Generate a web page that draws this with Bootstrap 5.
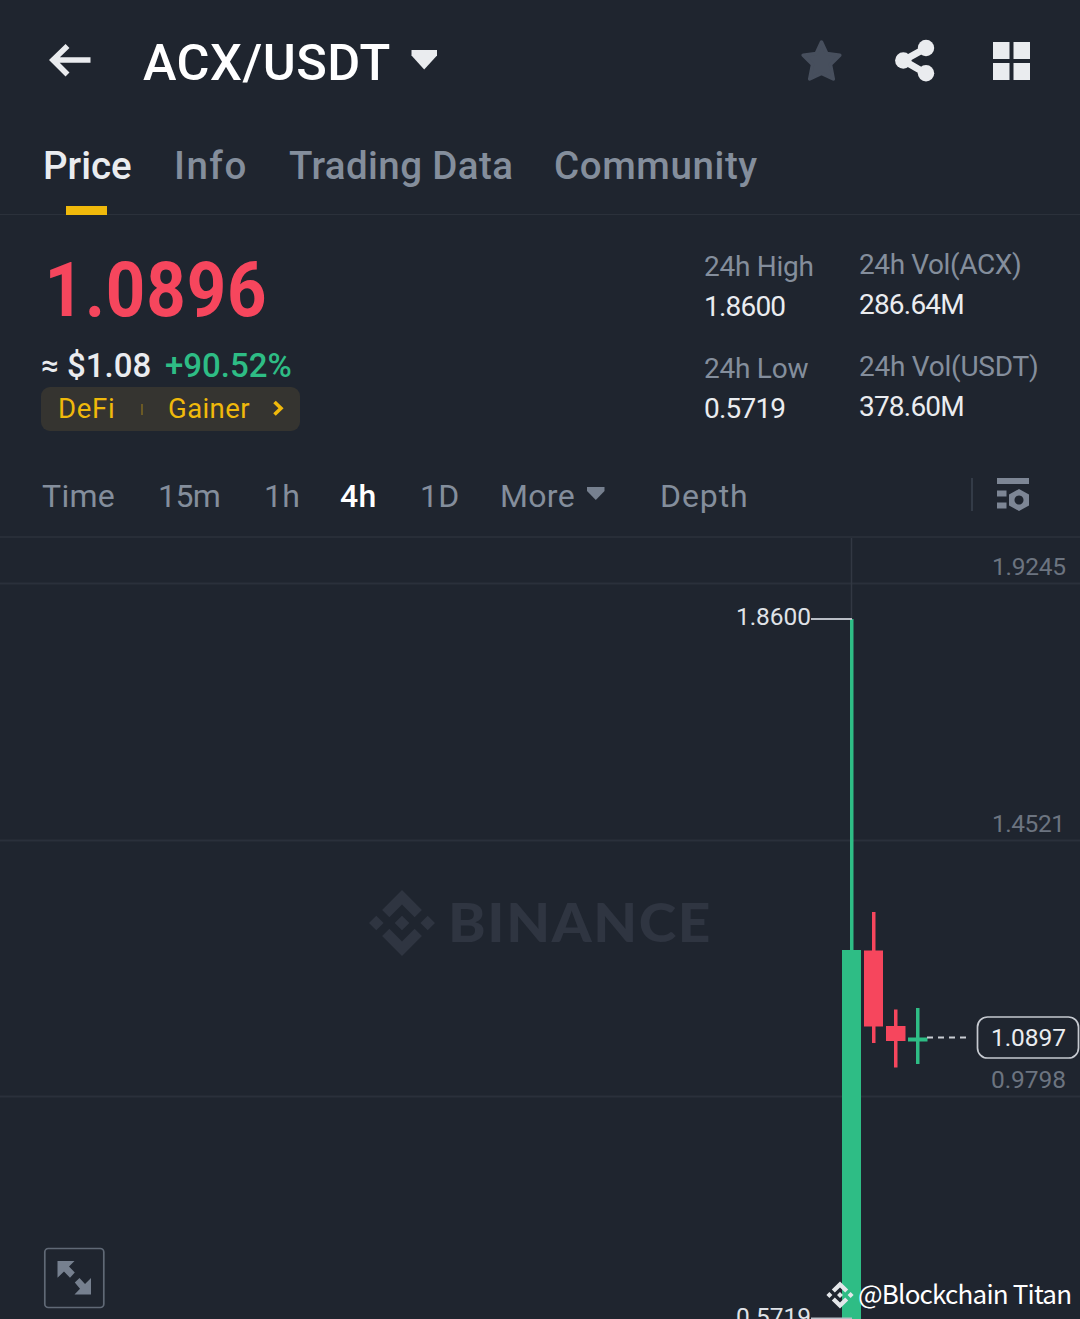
<!DOCTYPE html>
<html lang="en" data-bs-theme="dark">
<head>
<meta charset="utf-8">
<meta name="viewport" content="width=device-width, initial-scale=1">
<title>ACX/USDT</title>
<link href="https://cdn.jsdelivr.net/npm/bootstrap@5.3.0/dist/css/bootstrap.min.css" rel="stylesheet">
<style>
body{background:#1f252f;color:#eaecef;font-family:Roboto,"Liberation Sans",sans-serif;width:1080px;height:1319px;overflow:hidden}
svg{display:block;flex:none}
.topbar{height:115px;padding:6px 50px 0 49px}
.pair{font-size:50.5px;font-weight:500;line-height:60px;letter-spacing:.5px;color:#fff;margin-left:52px;margin-right:20px;padding-top:4px}
.topbar .tools{gap:58px}
.topbar .share{margin-left:-6px}
.tabs{display:grid;grid-template-columns:131px 115px 265px 300px;height:100px;padding-left:43px;border-bottom:1px solid #2b313b}
.tabs .nav-link{padding:0;font-size:38.5px;font-weight:500;line-height:102px;color:#848e9c;position:relative}
.tabs .nav-link.active{color:#eaecef}
.tabs .nav-link.active::after{content:"";position:absolute;left:23px;bottom:2px;width:41px;height:9px;background:#f0b90b}
.tabs .ls-info{letter-spacing:1.5px}.tabs .ls-td{letter-spacing:.4px}.tabs .ls-com{letter-spacing:.6px}
.quote{height:245px;padding-left:41px}
.last{font-size:76.5px;font-weight:700;line-height:100px;color:#f6465d;transform:scaleX(.9);transform-origin:left;letter-spacing:1px;padding:25px 0 0 4px}
.fiat{font-size:33px;font-weight:500;line-height:40px;margin-top:6px}
.fiat .about{width:26px;font-size:31px}.fiat .usd{width:98px}
.up{color:#2ebd85}
.tags{width:259px;height:44px;margin-top:1px;background:#353430;border-radius:9px;color:#f0b90b;font-size:27.5px;padding-left:17px}
.tags .t1{width:83px;letter-spacing:.7px}.tags .t2{width:104px;letter-spacing:.4px}
.tags .sep{width:2px;height:11px;background:#6b5a25;margin-right:25px}
.stats{font-size:28px;line-height:40px;padding-top:32px}
.stats dt{font-weight:400;color:#848e9c;letter-spacing:-.25px}
.stats dd{margin:0 0 22px;letter-spacing:-.8px}
.stats .s1{width:155px}.stats .s2{width:221px;margin-top:-2px}
.stats .acx{letter-spacing:-.4px}
.periods{height:78px;padding-left:42px;border-bottom:2px solid #282e38;font-size:32px;line-height:72px;padding-bottom:4px;color:#848e9c;letter-spacing:.3px}
.periods .now{color:#fff;font-weight:500}
.periods .p1{width:116px}.periods .p2{width:106px;letter-spacing:-.6px}.periods .p3{width:76px}.periods .p4{width:80px}.periods .p5{width:80px}.periods .p6{width:87px}.periods .tri{margin-right:55px;margin-top:-6px}
.periods .p7{letter-spacing:.9px;width:311px}
.periods .bar{width:2px;height:33px;background:#333b47;margin-right:24px;margin-top:-3px}
.periods .cfg{margin-top:-2px}
.cjk{font-family:"Noto Sans CJK SC",sans-serif;font-weight:400}
</style>
<script src="https://cdn.jsdelivr.net/npm/bootstrap@5.3.0/dist/js/bootstrap.bundle.min.js"></script>
</head>
<body>
<header class="topbar d-flex align-items-center">
  <svg width="42" height="34" viewBox="0 0 42 34" fill="none" stroke="#eaecef" stroke-width="5.600"><path d="M41.500 16H5M18.500 2L4 16 18.500 30.500"/></svg>
  <h1 class="pair mb-0">ACX/USDT</h1>
  <svg width="27" height="30" viewBox="0 0 27 30" fill="#eaecef"><path d="M.5 4h25.500v5.500L13.200 23.500.5 9.500z"/></svg>
  <div class="tools d-flex align-items-center ms-auto">
    <svg width="42" height="44" viewBox="0 0 42 44"><path d="M20.500 3l5.300 11.500 13 1.800-9.300 9.200 2.800 14.500L20.500 34.500 8.700 40 11.500 25.500 2.200 16.300l13-1.800z" fill="#474f5d" stroke="#474f5d" stroke-width="3.500" stroke-linejoin="round"/></svg>
    <svg class="share" width="40" height="44" viewBox="0 0 40 44" fill="#eaecef"><path d="M31 9L8.500 21.500 31 34.500" fill="none" stroke="#eaecef" stroke-width="7"/><circle cx="8.300" cy="21.500" r="8.200"/><circle cx="31" cy="9" r="8.200"/><circle cx="31" cy="34.200" r="8.200"/></svg>
    <svg width="37" height="38" viewBox="0 0 37 38" fill="#eaecef"><path d="M0 0h16.500v17H0zM20.500 0H37v17H20.500zM0 21h16.500v17H0zM20.500 21H37v17H20.500z"/></svg>
  </div>
</header>

<nav class="tabs nav">
  <a class="nav-link active">Price</a>
  <a class="nav-link ls-info">Info</a>
  <a class="nav-link ls-td">Trading Data</a>
  <a class="nav-link ls-com">Community</a>
</nav>

<section class="quote d-flex justify-content-between">
  <div>
    <div class="last">1.0896</div>
    <div class="fiat d-flex"><span class="about">≈</span><span class="usd">$1.08</span><span class="up">+90.52%</span></div>
    <div class="tags d-flex align-items-center">
      <span class="t1">DeFi</span><span class="sep"></span><span class="t2">Gainer</span>
      <svg width="14" height="18" viewBox="0 0 14 18" fill="none" stroke="#f0b90b" stroke-width="3.600"><path d="M2.500 2L9 8.200 2.500 14.500"/></svg>
    </div>
  </div>
  <div class="stats d-flex">
    <dl class="s1 mb-0"><dt>24h High</dt><dd>1.8600</dd><dt>24h Low</dt><dd>0.5719</dd></dl>
    <dl class="s2 mb-0"><dt class="acx">24h Vol(ACX)</dt><dd>286.64M</dd><dt>24h Vol(USDT)</dt><dd>378.60M</dd></dl>
  </div>
</section>

<div class="periods d-flex align-items-center">
  <span class="p1">Time</span><span class="p2">15m</span><span class="p3">1h</span><span class="p4 now">4h</span><span class="p5">1D</span><span class="p6">More</span>
  <svg class="tri" width="18" height="13" viewBox="0 0 18 13" fill="#76808f"><path d="M0 0h17.500v4L8.800 13 0 4z"/></svg>
  <span class="p7">Depth</span><span class="bar"></span>
  <svg class="cfg" width="34" height="34" viewBox="0 0 34 34" fill="#7d8695"><path d="M0 0h32v6H0zM0 12.500h9.500v6H0zM0 24.500h9.500v6H0z"/><path fill-rule="evenodd" d="M22 11l10 5.500v11L22 33l-10-5.500v-11zM22 17.500a4.500 4.500 0 1 0 .01 0z"/></svg>
</div>

<main>
<svg width="1080" height="781" viewBox="0 538 1080 781">
  <defs>
    <g id="mark"><path d="M0-34L20.500-13.500 13-6 0-19-13-6-20.500-13.500zM0 34L20.500 13.500 13 6 0 19-13 6-20.500 13.500zM0-7.500L7.500 0 0 7.500-7.500 0zM-26.500-7.500L-19 0-26.500 7.500-34 0zM26.500-7.500L34 0 26.500 7.500 19 0z"/></g>
  </defs>
  <g stroke="#2a303b" stroke-width="2"><path d="M0 583.500H1080M0 840.500H1080M0 1096.500H1080"/><path d="M851.500 538V619" stroke="#323843" stroke-width="1.500"/></g>
  <g fill="#2f3541"><use href="#mark" transform="translate(402 923) scale(.97)"/><text x="448" y="942" font-family="Lato" font-weight="900" font-size="52.500" letter-spacing="1.500" textLength="264" lengthAdjust="spacingAndGlyphs">BINANCE</text></g>
  <g fill="#6c7480" font-size="24.500"><text x="992" y="575" textLength="74">1.9245</text><text x="992" y="832" textLength="73">1.4521</text><text x="991" y="1088" textLength="75">0.9798</text></g>
  <g fill="#2ebd85"><path d="M850 619h3.500v332H850zM842 950h19v369h-19zM916 1008h3.500v56H916zM908 1037.500h19.500v4H908z"/></g>
  <g fill="#f6465d"><path d="M872 912h3.500v131H872zM864 950.500h19v76h-19zM894 1009.500h3.500v58H894zM886 1026h19.500v15H886z"/></g>
  <g fill="#dfe2e7" font-size="24.500"><text x="736" y="625" textLength="75">1.8600</text><text x="736" y="1325" textLength="75">0.5719</text></g>
  <path d="M811 619H852M811 1318.500H852" stroke="#b9bec6" stroke-width="2"/>
  <path d="M927 1037.500H966" stroke="#c9cdd3" stroke-width="2" stroke-dasharray="6 5"/>
  <rect x="977.500" y="1017" width="101" height="41" rx="10" fill="#1f252f" stroke="#c5c9d0" stroke-width="1.700"/>
  <text x="991" y="1046" font-size="24.500" textLength="75" fill="#eaecef">1.0897</text>
  <rect x="44.800" y="1248.500" width="59" height="59" rx="3.500" fill="none" stroke="#606976" stroke-width="1.700"/>
  <path d="M57.500 1261H74.500L69 1266.500 74.800 1272.500 70 1277.700 64 1271.500 57.500 1277.700zM91 1294.500H74.500L80 1288.700 74.800 1282.500 79.500 1278 85 1284 91 1278z" fill="#76808f"/>
  <use href="#mark" transform="translate(840 1295) scale(.4)" fill="#e4e7ea"/>
  <text class="cjk" x="858" y="1304" font-size="26" textLength="214" fill="#fff">@Blockchain Titan</text>
</svg>
</main>
</body>
</html>
